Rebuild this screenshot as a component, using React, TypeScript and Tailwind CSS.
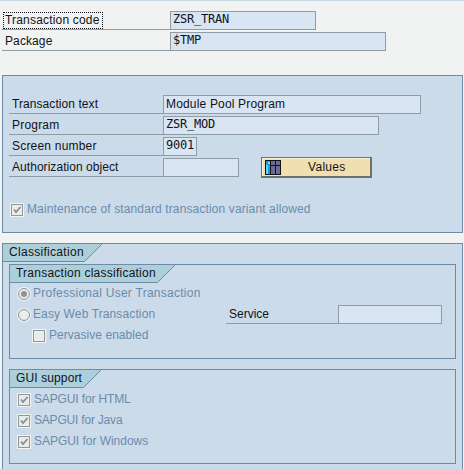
import type { ReactNode } from 'react';
import clsx from 'clsx';

interface FieldRowProps {
  label: string;
  value?: string;
  labelClass: string;
  inputClass: string;
  mono?: boolean;
  focused?: boolean;
}

function FieldRow({ label, value, labelClass, inputClass, mono, focused }: FieldRowProps) {
  return (
    <div className="flex h-[19px] shrink-0">
      <div className={clsx('flex items-center border-b border-[#8f9ca3] pl-[3px]', labelClass)}>
        <span className="relative">
          {label}
          {focused && (
            <span className="absolute -left-[2px] -right-[3px] top-0 h-[17px] border border-dotted border-[#10131c]" />
          )}
        </span>
      </div>
      <div
        className={clsx(
          'flex items-center whitespace-pre border border-[#8f9ca3] bg-[#d9e5f3] pl-[2px]',
          mono && "pb-[2px] font-['DejaVu_Sans_Mono',monospace] text-[12px] tracking-[-0.22px]",
          inputClass,
        )}
      >
        {value}
      </div>
    </div>
  );
}

interface OptionProps {
  label: string;
  checked?: boolean;
  className?: string;
}

function CheckBox({ label, checked, className }: OptionProps) {
  return (
    <div className={clsx('flex h-[21px] items-center gap-[3px] text-[#6c8bab]', className)}>
      <svg width="14" height="14" viewBox="0 0 14 14" className="shrink-0" shapeRendering="crispEdges">
        <rect width="14" height="14" fill="#f4f5f3" />
        <rect x="1.5" y="1.5" width="11" height="11" fill="#e9ecec" stroke="#92989a" />
        {checked && (
          <path d="M4 6.5 L6 9 L10.5 4" fill="none" stroke="#8b8f90" strokeWidth="1.8" shapeRendering="auto" />
        )}
      </svg>
      <span>{label}</span>
    </div>
  );
}

function Radio({ label, checked, className }: OptionProps) {
  return (
    <div className={clsx('flex h-[21px] items-center gap-[2px] text-[#6c8bab]', className)}>
      <svg width="14" height="14" viewBox="0 0 14 14" className="shrink-0">
        <circle cx="7" cy="7" r="7" fill="#f5f6f4" />
        <circle cx="7" cy="7" r="5.5" fill="#e9eded" stroke="#8c9294" />
        {checked && <circle cx="7" cy="7" r="3" fill="#8c9192" />}
      </svg>
      <span>{label}</span>
    </div>
  );
}

interface GroupBoxProps {
  title: string;
  tabWidth: number;
  titleClass?: string;
  className?: string;
  children: ReactNode;
}

function GroupBox({ title, tabWidth, titleClass, className, children }: GroupBoxProps) {
  return (
    <section className={clsx('border border-[#6c8ba6] bg-[#cbdbe9]', className)}>
      <div className="relative h-[18px]">
        <svg className="absolute left-0 top-0" width={tabWidth} height="18">
          <path d={`M0 0 H${tabWidth} L${tabWidth - 18} 17.5 H0 Z`} fill="#accfda" />
          <path d={`M${tabWidth} 0 L${tabWidth - 17.5} 17.5 H0`} fill="none" stroke="#6c8ba6" />
        </svg>
        <h2 className={clsx('relative pl-[6px] leading-[17px]', titleClass)}>{title}</h2>
      </div>
      {children}
    </section>
  );
}

function ValuesIcon() {
  return (
    <svg width="16" height="15" viewBox="0 0 16 15" className="shrink-0" shapeRendering="crispEdges">
      <rect width="16" height="15" fill="#10131c" />
      <rect x="1" y="1" width="4" height="13" fill="#16a0df" />
      <rect x="1" y="5" width="2" height="9" fill="#5fd4f8" />
      <rect x="3" y="2" width="2" height="2" fill="#75dcfa" />
      <rect x="6" y="1" width="4" height="4" fill="#6d6a96" />
      <rect x="11" y="1" width="4" height="4" fill="#6d6a96" />
      <rect x="6" y="6" width="4" height="8" fill="#6d6a96" />
      <rect x="11" y="6" width="4" height="8" fill="#6d6a96" />
    </svg>
  );
}

export default function App() {
  return (
    <main className="flex h-[469px] w-[464px] flex-col overflow-hidden whitespace-nowrap border-t border-[#c5d5e1] bg-[#f1f2f2] pl-[2px] font-['Liberation_Sans',Arial,sans-serif] text-[12px] leading-[17px] tracking-[0.2px] text-[#10131c]">
      <div className="mt-[10px] flex flex-col gap-[2px]">
        <FieldRow label="Transaction code" value="ZSR_TRAN" labelClass="w-[168px] tracking-[0.18px]" inputClass="w-[146px]" mono focused />
        <FieldRow label="Package" value="$TMP" labelClass="w-[168px] tracking-[0.1px]" inputClass="w-[216px]" mono />
      </div>

      <section className="mt-6 h-[158px] w-[461px] shrink-0 border border-[#6c8ba6] bg-[#cbdbe9] pl-[6px] pt-[19px]">
        <div className="flex flex-col gap-[2px]">
          <FieldRow label="Transaction text" value="Module Pool Program" labelClass="w-[154px] tracking-[0.07px]" inputClass="w-[258px] tracking-[0.17px]" />
          <FieldRow label="Program" value="ZSR_MOD" labelClass="w-[154px]" inputClass="w-[216px]" mono />
          <FieldRow label="Screen number" value="9001" labelClass="w-[154px]" inputClass="w-[34px]" mono />
          <div className="flex">
            <FieldRow label="Authorization object" labelClass="w-[154px] tracking-[0.05px]" inputClass="w-[76px]" />
            <button className="-mb-px -mt-px ml-[22px] flex h-[21px] w-[111px] items-center border border-b-2 border-r-2 border-[#6d716c] bg-[#f1dfb0] pl-[3px] shadow-[inset_1px_1px_0_#fbf2d6]">
              <ValuesIcon />
              <span className="ml-[27px] tracking-[0.3px]">Values</span>
            </button>
          </div>
        </div>
        <CheckBox label="Maintenance of standard transaction variant allowed" checked className="mt-[22px] pl-px tracking-[0.12px]" />
      </section>

      <GroupBox title="Classification" tabWidth={99} titleClass="tracking-[0.3px]" className="mt-[10px] h-[240px] w-[461px] shrink-0">
        <div className="flex flex-col gap-[10px] pl-[6px] pt-[2px]">
          <GroupBox title="Transaction classification" tabWidth={165} titleClass="tracking-[0.24px]" className="h-[95px] w-[447px]">
            <div className="flex">
              <div className="w-[216px] pl-[7px]">
                <Radio label="Professional User Transaction" checked className="tracking-[0.26px]" />
                <Radio label="Easy Web Transaction" className="tracking-[0.12px]" />
                <CheckBox label="Pervasive enabled" className="pl-[15px] tracking-[0.04px]" />
              </div>
              <div className="pt-[22px]">
                <FieldRow label="Service" labelClass="w-[112px] tracking-[0px]" inputClass="w-[104px]" />
              </div>
            </div>
          </GroupBox>
          <GroupBox title="GUI support" tabWidth={91} titleClass="tracking-[0.12px]" className="h-[95px] w-[447px]">
            <div className="pl-[7px] pt-px tracking-[-0.03px]">
              <CheckBox label="SAPGUI for HTML" checked className="tracking-[-0.14px]" />
              <CheckBox label="SAPGUI for Java" checked className="tracking-[-0.2px]" />
              <CheckBox label="SAPGUI for Windows" checked />
            </div>
          </GroupBox>
        </div>
      </GroupBox>
    </main>
  );
}
